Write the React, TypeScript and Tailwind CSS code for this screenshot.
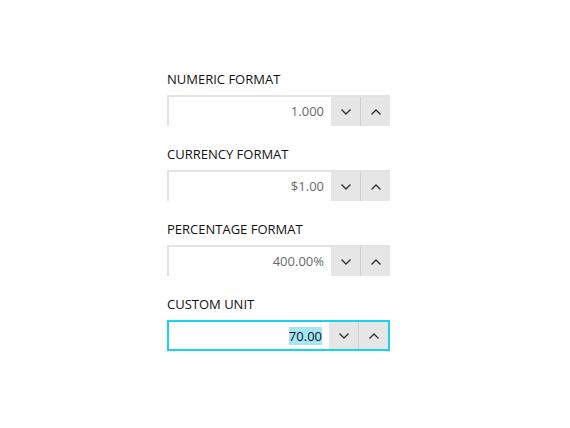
import React from "react";

const Chevron = ({ up }: { up?: boolean }) => (
  <svg width="12" height="8" viewBox="0 0 12 8" fill="none" stroke="#333" strokeWidth="1.4">
    {up ? <path d="M1.5 6.5 L6 2 L10.5 6.5" /> : <path d="M1.5 1.5 L6 6 L10.5 1.5" />}
  </svg>
);

function Field({ label, value, focused }: { label: string; value: string; focused?: boolean }) {
  return (
    <div className="flex flex-col">
      <div className="text-[13px] leading-[18px] text-[#111] mb-[7px]">{label}</div>
      <div
        className={
          "flex h-[31px] w-[223px] " +
          (focused ? "border-2 border-[#19d2f3]" : "border-t-2 border-l-2 border-[#e3e3e3]")
        }
      >
        <div className="flex-1 flex items-center justify-end pr-[7px] text-[13px]">
          {focused ? (
            <span className="bg-[#a5e6f5] text-[#111] leading-[18px]">{value}</span>
          ) : (
            <span className="text-[#6a6a6a]">{value}</span>
          )}
        </div>
        <div className="w-[30px] bg-[#e6e6e6] flex items-center justify-center border-r border-[#d0d0d0]">
          <Chevron />
        </div>
        <div className="w-[29px] bg-[#e6e6e6] flex items-center justify-center">
          <Chevron up />
        </div>
      </div>
    </div>
  );
}

export default function App() {
  return (
    <div
      className="w-[570px] h-[428px] bg-white pl-[167px] pt-[70px] flex flex-col gap-[19px]"
      style={{ fontFamily: '"Open Sans", "Noto Sans", sans-serif' }}
    >
      <Field label="NUMERIC FORMAT" value="1.000" />
      <Field label="CURRENCY FORMAT" value="$1.00" />
      <Field label="PERCENTAGE FORMAT" value="400.00%" />
      <Field label="CUSTOM UNIT" value="70.00" focused />
    </div>
  );
}
